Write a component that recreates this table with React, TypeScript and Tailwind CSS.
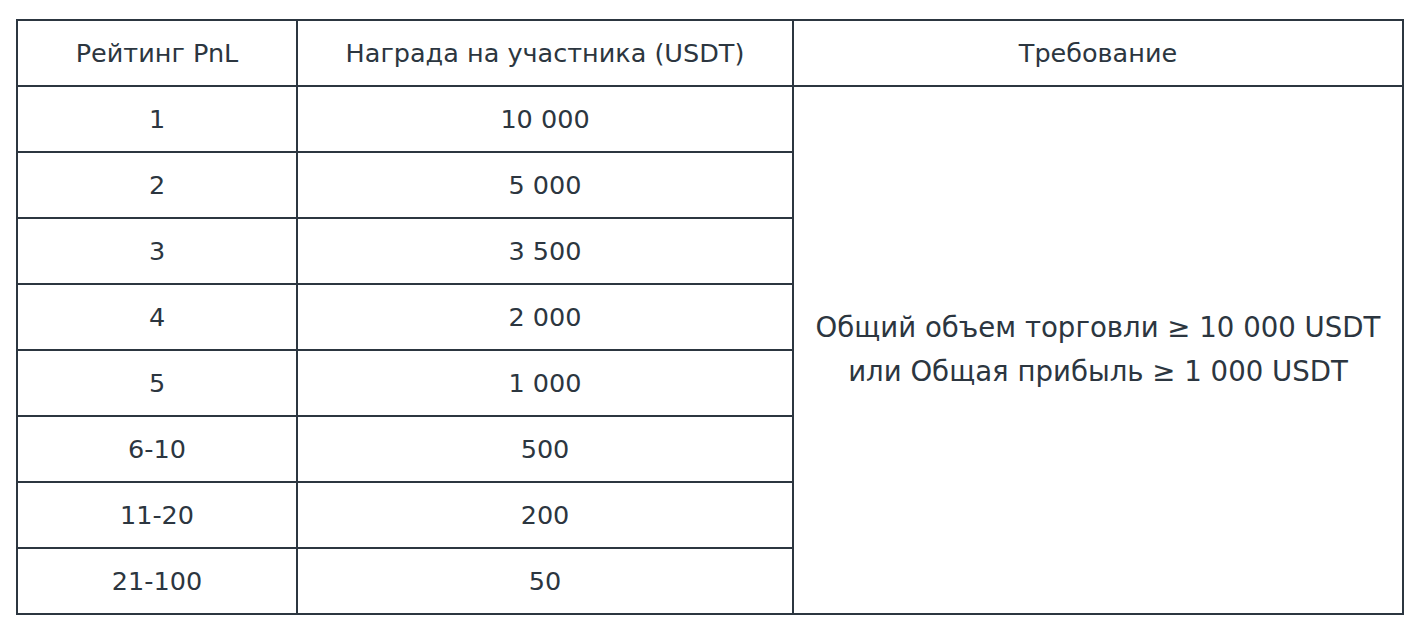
import React from "react";

const rows: [string, string][] = [
  ["1", "10 000"],
  ["2", "5 000"],
  ["3", "3 500"],
  ["4", "2 000"],
  ["5", "1 000"],
  ["6-10", "500"],
  ["11-20", "200"],
  ["21-100", "50"],
];

const cell = "border-2 border-[#2c3640] text-center align-middle p-0";

const App: React.FC = () => {
  return (
    <div className="min-h-screen bg-white pt-[19px] pl-[16px] text-[#2c3640] font-['DejaVu_Sans',Verdana,sans-serif] text-[25.5px]">
      <table className="border-collapse table-fixed w-[1388px]">
        <colgroup>
          <col className="w-[280px]" />
          <col className="w-[496px]" />
          <col />
        </colgroup>
        <thead>
          <tr className="h-[66px]">
            <th className={`${cell} font-normal`}>Рейтинг PnL</th>
            <th className={`${cell} font-normal`}>Награда на участника (USDT)</th>
            <th className={`${cell} font-normal`}>Требование</th>
          </tr>
        </thead>
        <tbody>
          {rows.map(([rank, reward], i) => (
            <tr key={rank} className="h-[66px]">
              <td className={cell}>{rank}</td>
              <td className={cell}>{reward}</td>
              {i === 0 && (
                <td rowSpan={8} className={`${cell} text-[27.6px] leading-[44px]`}>
                  Общий объем торговли ≥ 10 000 USDT
                  <br />
                  или Общая прибыль ≥ 1 000 USDT
                </td>
              )}
            </tr>
          ))}
        </tbody>
      </table>
    </div>
  );
};

export default App;
